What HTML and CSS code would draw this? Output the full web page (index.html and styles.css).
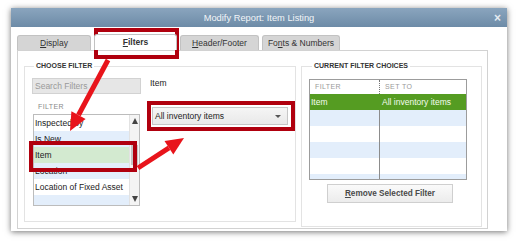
FILE: index.html
```html
<!DOCTYPE html>
<html lang="en">
<head>
  <meta charset="UTF-8" />
  <title>Modify Report: Item Listing</title>
  <link rel="stylesheet" href="styles.css">
</head>
<body>

  <div class="window">
    <div class="titlebar">
      <span class="title">Modify Report: Item Listing</span>
      <span class="close">&times;</span>
    </div>

    <div class="content">
      <div class="tabs">
        <div class="tab tab-display"><u>D</u>isplay</div>
        <div class="tab tab-filters active"><u>F</u>ilters</div>
        <div class="tab tab-header"><u>H</u>eader/Footer</div>
        <div class="tab tab-fonts">Fo<u>n</u>ts &amp; Numbers</div>
      </div>

      <div class="panel">
        <fieldset class="group choose">
          <legend>CHOOSE FILTER</legend>
          <div class="choose-grid">
            <div class="col-list">
              <div class="search">Search Filters</div>
              <div class="small-label">FILTER</div>
              <div class="listbox">
                <div class="rows">
                  <div class="row">Inspected by</div>
                  <div class="row alt">Is New</div>
                  <div class="row selected">Item</div>
                  <div class="row alt">Location</div>
                  <div class="row">Location of Fixed Asset</div>
                  <div class="row alt short"></div>
                </div>
                <div class="scrollbar">
                  <span class="arrow-up"></span>
                  <span class="thumb"></span>
                  <span class="arrow-down"></span>
                </div>
              </div>
            </div>
            <div class="col-value">
              <div class="value-label">Item</div>
              <div class="combo">
                <span>All inventory items</span>
                <span class="caret"></span>
              </div>
            </div>
          </div>
        </fieldset>

        <fieldset class="group current">
          <legend>CURRENT FILTER CHOICES</legend>
          <div class="choices">
            <div class="choice head">
              <div class="c1">FILTER</div>
              <div class="c2">SET TO</div>
            </div>
            <div class="choice picked">
              <div class="c1">Item</div>
              <div class="c2">All inventory items</div>
            </div>
            <div class="choice alt"><div class="c1"></div><div class="c2"></div></div>
            <div class="choice"><div class="c1"></div><div class="c2"></div></div>
            <div class="choice alt"><div class="c1"></div><div class="c2"></div></div>
            <div class="choice"><div class="c1"></div><div class="c2"></div></div>
            <div class="choice alt last"><div class="c1"></div><div class="c2"></div></div>
          </div>
          <button class="remove-btn"><u>R</u>emove Selected Filter</button>
        </fieldset>
      </div>
    </div>
  </div>

  <!-- annotation overlays -->
  <div class="mark mark-tab"></div>
  <div class="mark mark-item"></div>
  <div class="mark mark-combo"></div>

  <svg class="arrows" width="520" height="243" viewBox="0 0 520 243">
    <line x1="108" y1="60" x2="78.5" y2="115" stroke="#e8141b" stroke-width="5" />
    <polygon points="70,131 85.6,118.9 71.4,111.3" fill="#e8141b" />
    <line x1="138" y1="168" x2="169" y2="147.8" stroke="#e8141b" stroke-width="5" />
    <polygon points="184,138 173.3,154.5 164.5,141.1" fill="#e8141b" />
  </svg>

</body>
</html>
```

FILE: styles.css
```css
body {
  margin: 0;
  padding: 8px 0 0 11px;
  width: 520px;
  height: 243px;
  box-sizing: border-box;
  background: #fff;
  font-family: 'Liberation Sans', Arial, sans-serif;
  font-size: 8.5px;
  color: #222;
  overflow: hidden;
  position: relative;
}
.window {
  width: 496px;
  height: 223px;
  background: #fff;
  box-shadow: 0 1px 6px rgba(0, 0, 0, 0.55);
}
.titlebar {
  height: 19px;
  background: linear-gradient(#8aa5be, #6d8ba7);
  display: flex;
  align-items: center;
  justify-content: center;
  position: relative;
  color: #f2f5f8;
}
.title {
  font-size: 9.3px;
}
.close {
  position: absolute;
  right: 6px;
  top: 3px;
  font-size: 12px;
  font-weight: bold;
  color: #e4ebf1;
}
.content {
  padding: 8px 0 0 6px;
}
.tabs {
  display: flex;
  gap: 3px;
  height: 15px;
}
.tab {
  height: 15px;
  line-height: 15px;
  text-align: center;
  background: #d5d5d5;
  border: 1px solid #c2c2c2;
  border-bottom: none;
  border-radius: 3px 3px 0 0;
  box-sizing: border-box;
  color: #333;
}
.tab u {
  text-decoration-thickness: 1px;
}
.tab-display { width: 74px; }
.tab-filters { width: 83px; }
.tab-header { width: 79px; }
.tab-fonts { width: 78px; }
.tab.active {
  background: #fff;
  font-weight: bold;
  position: relative;
  z-index: 1;
  height: 16px;
  margin-top: -1px;
}
.panel {
  width: 471px;
  height: 179px;
  border: 1px solid #d2d2d2;
  box-sizing: border-box;
  display: flex;
  padding: 11px 0 0 6px;
}
.group {
  margin: 0;
  padding: 0;
  min-width: 0;
  border: 1px solid #e3e3e3;
  box-sizing: border-box;
}
.group legend {
  font-size: 7px;
  line-height: 8px;
  font-weight: bold;
  color: #333;
  padding: 0 2px;
  margin-left: 2px;
}
.choose {
  width: 272px;
  height: 160px;
  margin-right: 5px;
  padding: 8px 0 0 7px;
}
.current {
  width: 181px;
  height: 165px;
  padding: 9px 0 0 7px;
}
.current legend {
  margin-left: 3px;
}
.choose-grid {
  display: flex;
  gap: 9px;
}
.col-list {
  width: 109px;
}
.search {
  height: 16px;
  line-height: 14px;
  background: #e6e6e6;
  border: 1px solid #d2d2d2;
  box-sizing: border-box;
  padding-left: 2px;
  color: #9a9a9a;
}
.small-label {
  margin: 9px 0 0 6px;
  font-size: 7px;
  line-height: 8px;
  letter-spacing: 0.4px;
  color: #8a8a8a;
}
.listbox {
  margin: 3px 0 0 1px;
  width: 107px;
  height: 92px;
  border: 1px solid #bcbcbc;
  box-sizing: border-box;
  display: flex;
}
.rows {
  flex: 1;
}
.row {
  height: 16px;
  line-height: 16px;
  padding-left: 1px;
  white-space: nowrap;
}
.row.alt {
  background: #e3eefb;
}
.row.selected {
  background: #d3ead0;
}
.row.short {
  height: 10px;
}
.scrollbar {
  width: 9px;
  background: #f4f4f4;
  border-left: 1px solid #e2e2e2;
  display: flex;
  flex-direction: column;
  align-items: center;
  padding: 3px 0;
}
.arrow-up,
.arrow-down {
  width: 0;
  height: 0;
  border-left: 3.5px solid transparent;
  border-right: 3.5px solid transparent;
}
.arrow-up {
  border-bottom: 6px solid #444;
}
.arrow-down {
  border-top: 6px solid #444;
  margin-top: auto;
}
.thumb {
  width: 7px;
  height: 20px;
  margin-top: 21px;
  background: #c6c6c6;
}
.value-label {
  line-height: 9px;
  margin-top: 1px;
}
.combo {
  margin: 19px 0 0 2px;
  width: 136px;
  height: 18px;
  border: 1px solid #c6c6c6;
  box-sizing: border-box;
  background: linear-gradient(#f5f5f5, #e9e9e9);
  display: flex;
  align-items: center;
  padding: 0 6px 0 2px;
}
.caret {
  margin-left: auto;
  width: 0;
  height: 0;
  border-left: 3px solid transparent;
  border-right: 3px solid transparent;
  border-top: 3px solid #555;
}
.choices {
  width: 158px;
  height: 101px;
  border: 1px solid #9c9c9c;
  box-sizing: border-box;
  overflow: hidden;
}
.choice {
  display: flex;
  height: 16px;
  line-height: 16px;
}
.choice .c1 {
  width: 68px;
  padding-left: 1px;
  border-right: 1px solid #8c8c8c;
}
.choice .c2 {
  flex: 1;
  padding-left: 2px;
}
.choice.alt {
  background: #e3eefb;
}
.choice.head {
  height: 14px;
  line-height: 14px;
  font-size: 7px;
  letter-spacing: 0.4px;
  color: #9a9a9a;
  background: #fff;
}
.choice.head .c1 {
  padding-left: 5px;
  width: 64px;
  border-right: 1px dotted #777;
}
.choice.head .c2 {
  padding-left: 5px;
}
.choice.picked {
  background: #559c22;
  color: #f4fbef;
}
.choice.picked .c1 {
  border-right-color: #559c22;
}
.remove-btn {
  display: block;
  margin: 4px 0 0 18px;
  width: 126px;
  height: 19px;
  padding: 0;
  border: 1px solid #cfcfcf;
  background: linear-gradient(#fafafa, #ececec);
  font-family: 'Liberation Sans', Arial, sans-serif;
  font-size: 8.2px;
  font-weight: bold;
  color: #4a4a4a;
}
.mark {
  position: absolute;
  border: 4px solid #b0000e;
  box-sizing: border-box;
}
.mark-tab {
  left: 94px;
  top: 28px;
  width: 85px;
  height: 31px;
}
.mark-item {
  left: 29px;
  top: 141px;
  width: 108px;
  height: 31px;
}
.mark-combo {
  left: 147px;
  top: 101px;
  width: 148px;
  height: 30px;
}
.arrows {
  position: absolute;
  left: 0;
  top: 0;
}
```
